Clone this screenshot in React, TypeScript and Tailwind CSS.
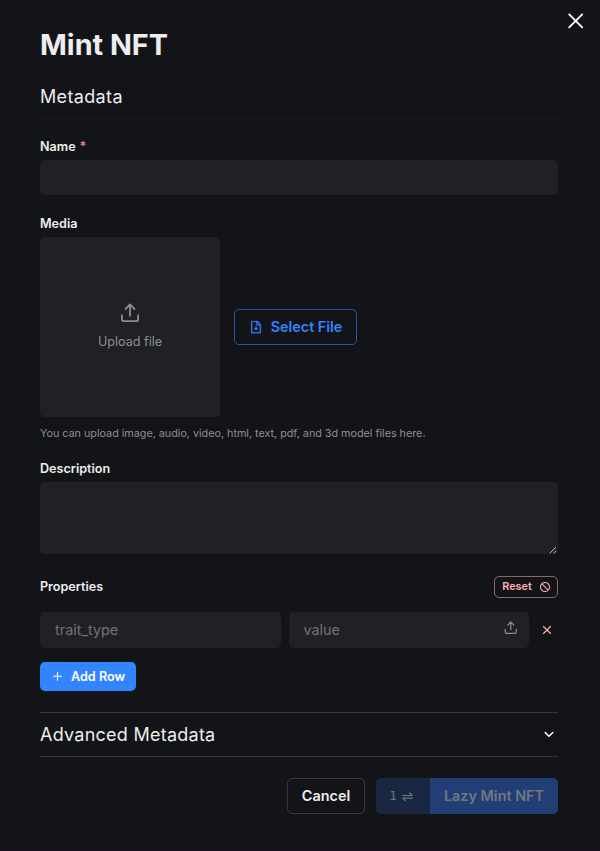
import { useState } from "react";
import { AiOutlineFileAdd } from "react-icons/ai";
import { BiBlock } from "react-icons/bi";
import { FiX } from "react-icons/fi";

const inputClass =
  "block w-full rounded-[5px] bg-[#202124] text-[14.4px] text-[#eeeeee] outline-none placeholder:text-[#717174]";

export default function App() {
  const [rows, setRows] = useState([0]);
  const removeRow = (id: number) => setRows(rows.filter((row) => row !== id));

  return (
    <main className="relative h-[851px] w-[600px] overflow-hidden border-b border-[#18101a] bg-[#131418] px-10 font-['Inter',sans-serif] text-[#ededee]">
      <button
        type="button"
        aria-label="Close"
        className="absolute top-[11px] right-[14px]"
      >
        <CloseIcon />
      </button>

      <h1 className="mt-[27px] h-9 text-[28.8px] leading-9 font-bold whitespace-nowrap">
        Mint NFT
      </h1>
      <div className="mt-5 h-[36px] w-[518px] border-b border-[#1c1d21]">
        <h2 className="text-[18px] leading-7 tracking-[0.35px]">Metadata</h2>
      </div>

      <form className="w-[518px]" onSubmit={(event) => event.preventDefault()}>
        <FieldLabel className="mt-[18px]" required>
          Name
        </FieldLabel>
        <input className={`${inputClass} mt-[2.5px] h-[35.5px] px-[15px]`} />

        <FieldLabel className="mt-[19px]">Media</FieldLabel>
        <div className="mt-[3px] flex items-center gap-[14px]">
          <div className="flex h-[179.5px] w-[180px] flex-col items-center justify-center rounded-[5px] bg-[#202124] text-[#8e8e91]">
            <UploadIcon className="size-5" />
            <span className="mt-[8px] h-5 pt-px text-[12.6px] leading-5">
              Upload file
            </span>
          </div>
          <button
            type="button"
            className="flex h-9 w-[123px] items-center justify-center gap-2 rounded-[5px] border border-[#2559a8] text-[14.4px] font-semibold text-[#3385ff]"
          >
            <AiOutlineFileAdd className="size-[14px]" strokeWidth="20" />
            Select File
          </button>
        </div>
        <p className="mt-[8px] text-[10.8px] leading-[18px] tracking-[-0.02px] text-[#8e8e91]">
          You can upload image, audio, video, html, text, pdf, and 3d model
          files here.
        </p>

        <FieldLabel className="mt-[16.5px]">Description</FieldLabel>
        <div className="relative mt-[3px]">
          <textarea className={`${inputClass} h-[72px] resize-none`} />
          <ResizeHandle />
        </div>

        <div className="mt-[21.5px] flex h-[22px] items-center justify-between">
          <FieldLabel>Properties</FieldLabel>
          <button
            type="button"
            className="flex h-[22px] w-[64px] items-center justify-center gap-[7px] rounded-[5px] border border-[#8b6869] pl-px text-[10.8px] font-semibold text-[#feb2b2]"
            onClick={() => setRows([0])}
          >
            <span className="pt-px">Reset</span>
            <BiBlock className="size-3" />
          </button>
        </div>

        {rows.map((row) => (
          <div key={row} className="mt-[14px] flex items-center">
            <input
              className={`${inputClass} h-9 max-w-[241px] px-[15px] pb-px`}
              placeholder="trait_type"
            />
            <div className="relative ml-2 w-[240px]">
              <input
                className={`${inputClass} h-9 px-[14.5px] pb-px`}
                placeholder="value"
              />
              <UploadIcon className="absolute top-[9px] right-[11.5px] size-[13.5px]" />
            </div>
            <button
              type="button"
              aria-label="Remove row"
              className="ml-[11px] text-[#feb2b2]"
              onClick={() => removeRow(row)}
            >
              <FiX className="size-[14px]" />
            </button>
          </div>
        ))}

        <button
          type="button"
          className="mt-[14px] flex h-[29px] w-[96px] items-center justify-center gap-2 rounded-[5px] bg-[#3385ff] text-[12.6px] font-semibold text-white"
          onClick={() => setRows([...rows, Date.now()])}
        >
          <PlusIcon />
          <span className="pt-0.5">Add Row</span>
        </button>

        <button
          type="button"
          className="mt-[21px] flex h-[45px] w-full items-center justify-between border-y border-[#38393c]"
        >
          <span className="text-[18px] tracking-[0.25px]">
            Advanced Metadata
          </span>
          <ChevronIcon />
        </button>

        <div className="mt-[21px] flex justify-end gap-[11px] text-[14.4px] font-semibold">
          <button
            type="button"
            className="h-9 w-[78px] rounded-[5px] border border-[#38393c]"
          >
            Cancel
          </button>
          <button
            type="submit"
            disabled
            className="flex h-9 w-[182px] overflow-hidden rounded-[5px] bg-[#213f75] text-[#737880]"
          >
            <span className="flex h-9 w-[54px] items-center justify-center gap-[5px] bg-[#192742] pt-0.5 pr-1 font-['DejaVu_Sans_Mono',monospace] text-[12.6px] font-normal">
              1
              <TransactionIcon />
            </span>
            <span className="flex-1 leading-9">Lazy Mint NFT</span>
          </button>
        </div>
      </form>
    </main>
  );
}

interface FieldLabelProps {
  children: string;
  className?: string;
  required?: boolean;
}

function FieldLabel({ children, className = "", required }: FieldLabelProps) {
  return (
    <label
      className={`block h-5 text-[12.6px] leading-5 font-semibold ${className}`}
    >
      {children}
      {required && <span className="ml-1 text-[#e58f8c]">*</span>}
    </label>
  );
}

function CloseIcon() {
  return (
    <svg
      className="size-5"
      viewBox="0 0 20 20"
      fill="none"
      stroke="white"
      strokeWidth="1.8"
      strokeLinecap="round"
    >
      <path d="M3.2 3.400l13 13M16.2 3.400l-13 13" />
    </svg>
  );
}

function UploadIcon({ className }: { className: string }) {
  return (
    <svg
      className={className}
      viewBox="0 0 20 20"
      fill="none"
      stroke="#8e8e91"
      strokeWidth="1.8"
      strokeLinecap="round"
      strokeLinejoin="round"
    >
      <path d="M1.9 12.2v4.1a1.9 1.9 0 0 0 1.9 1.9h12.4a1.9 1.9 0 0 0 1.9-1.9v-4.1M10 12.7V1.6M5.4 6.1L10 1.5l4.6 4.6" />
    </svg>
  );
}

function PlusIcon() {
  return (
    <svg
      className="size-3"
      viewBox="0 0 12 12"
      fill="none"
      stroke="currentColor"
      strokeWidth="1.1"
      strokeLinecap="round"
    >
      <path d="M6.5 2.2v8M2.5 6.2h8" />
    </svg>
  );
}

function ChevronIcon() {
  return (
    <svg
      className="mr-[3px] size-3"
      viewBox="0 0 12 12"
      fill="none"
      stroke="white"
      strokeWidth="1.5"
      strokeLinecap="round"
      strokeLinejoin="round"
    >
      <path d="M2.2 4.5L6 8.300l3.8-3.8" />
    </svg>
  );
}

// Pair of half arrows shown next to the transaction count
function TransactionIcon() {
  return (
    <svg
      className="h-3 w-[11px]"
      viewBox="0 0 11 12"
      fill="none"
      stroke="currentColor"
      strokeWidth="1.1"
      strokeLinecap="round"
      strokeLinejoin="round"
    >
      <path d="M.6 4.5h9.6L7.6 2M10.4 7.1H.8l2.6 2.5" />
    </svg>
  );
}

function ResizeHandle() {
  return (
    <svg
      className="pointer-events-none absolute right-px bottom-0 size-2"
      viewBox="0 0 8 8"
      fill="none"
      stroke="#c4c4c5"
      strokeWidth="1"
    >
      <path d="M.8 7.3l6-6M4.7 7.3l2.3-2.3" />
    </svg>
  );
}
